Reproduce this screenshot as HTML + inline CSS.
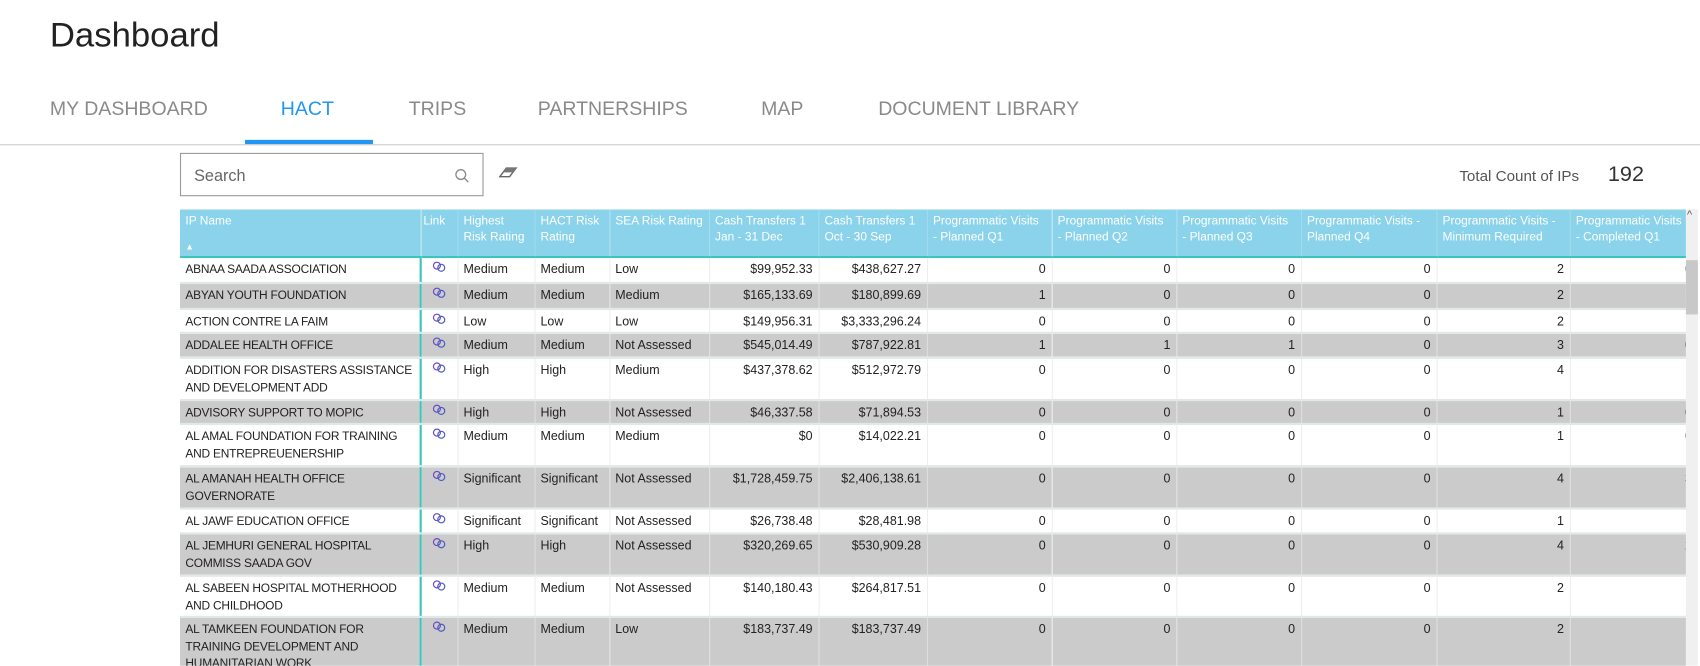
<!DOCTYPE html>
<html><head><meta charset="utf-8"><style>
body{margin:0;width:1700px;height:665px;background:#fff;overflow:hidden;font-family:"Liberation Sans",sans-serif;position:relative}
#w{position:absolute;left:0;top:0;width:1568px;height:614px;transform:scale(1.0842);transform-origin:0 0;overflow:hidden}
.title{position:absolute;left:46px;top:14px;font-size:32px;color:#222}
.tab{position:absolute;top:90px;font-size:18px;color:#8a8a8a}
.hl{position:absolute;left:0;top:133px;width:1568px;height:1px;background:#ccc}
.ul{position:absolute;left:226px;top:129px;width:118px;height:4px;background:#2196f3}
.search{position:absolute;left:166px;top:141px;width:280px;height:40px;border:1px solid #999;box-sizing:border-box;color:#666;font-size:15px;padding:12px 0 0 12px}
.tbl{position:absolute;left:166px;top:193px;width:1389px;height:430px;overflow:hidden}
table{border-collapse:collapse;table-layout:fixed;width:1400px;font-size:11.5px;color:#222}
th{background:#8ad3ea;color:#fff;font-weight:normal;text-align:left;vertical-align:top;padding:4px 5px 0 5px;height:35px;border-bottom:2px solid #3cc5bd;line-height:15px;font-size:11px;border-right:1px solid #9fdbec;position:relative}
td{vertical-align:top;padding:4px 5px 0 5px;line-height:15.5px;border-bottom:2px solid #e0e8e8;border-right:1px solid #eee;white-space:nowrap;overflow:hidden}
td.n{white-space:normal;font-size:11px;letter-spacing:-0.2px;border-right:2px solid #3cc5bd}
td.r{text-align:right}
tr.g td{background:#cbcbcb;border-right-color:#ddd}
tr.g td.n{border-right-color:#3cc5bd}
td.lk{text-align:center;padding:3px 0 0 0}
.sb{position:absolute;left:1555px;top:193px;width:11px;height:430px;background:#f0f0f0}
.th{position:absolute;left:1555px;top:240px;width:11px;height:50px;background:#c8c8c8}
</style></head><body><div id="w">
<svg width="0" height="0" style="position:absolute"><symbol id="lk" viewBox="0 0 14 10"><circle cx="5" cy="4" r="3.2" fill="none" stroke="#6a4cc4" stroke-width="1.1"/><circle cx="9" cy="6" r="3.2" fill="none" stroke="#4a5cc4" stroke-width="1.1"/></symbol></svg>
<div class="title">Dashboard</div>
<div class="tab" style="left:46px">MY DASHBOARD</div>
<div class="tab" style="left:259px;color:#2196f3">HACT</div>
<div class="tab" style="left:377px">TRIPS</div>
<div class="tab" style="left:496px">PARTNERSHIPS</div>
<div class="tab" style="left:702px">MAP</div>
<div class="tab" style="left:810px">DOCUMENT LIBRARY</div>
<div class="ul"></div><div class="hl"></div>
<div class="search">Search<svg style="position:absolute;left:252px;top:13px" width="14" height="14" viewBox="0 0 14 14"><circle cx="6" cy="6" r="4.5" fill="none" stroke="#888" stroke-width="1.2"/><path d="M9.3 9.3L13 13" stroke="#888" stroke-width="1.2"/></svg></div>
<svg style="position:absolute;left:460px;top:153px" width="18" height="12" viewBox="0 0 18 12"><path d="M1 10L7 2H16L10 10Z" fill="none" stroke="#666" stroke-width="1.3"/><path d="M4 6H13L16 2H7Z" fill="#777"/></svg>
<div style="position:absolute;left:1346px;top:154px;font-size:14px;color:#555">Total Count of IPs</div>
<div style="position:absolute;left:1483px;top:150px;font-size:20px;color:#333">192</div>
<div class="tbl"><table>
<colgroup><col style="width:222px"><col style="width:34px"><col style="width:71px"><col style="width:69px"><col style="width:92px"><col style="width:101px"><col style="width:100px"><col style="width:115px"><col style="width:115px"><col style="width:115px"><col style="width:125px"><col style="width:123px"><col style="width:118px"></colgroup>
<tr><th>IP Name<span style="position:absolute;left:5px;top:27px;font-size:8px">▲</span></th><th style="padding:4px 2px">Link</th><th>Highest Risk Rating</th><th>HACT Risk Rating</th><th>SEA Risk Rating</th><th>Cash Transfers 1 Jan - 31 Dec</th><th>Cash Transfers 1 Oct - 30 Sep</th><th>Programmatic Visits - Planned Q1</th><th>Programmatic Visits - Planned Q2</th><th>Programmatic Visits - Planned Q3</th><th>Programmatic Visits - Planned Q4</th><th>Programmatic Visits - Minimum Required</th><th>Programmatic Visits<br>- Completed Q1</th></tr>
<tr style="height:24px"><td class="n">ABNAA SAADA ASSOCIATION</td><td class="lk"><svg width="14" height="10"><use href="#lk"/></svg></td><td>Medium</td><td>Medium</td><td>Low</td><td class="r">$99,952.33</td><td class="r">$438,627.27</td><td class="r">0</td><td class="r">0</td><td class="r">0</td><td class="r">0</td><td class="r">2</td><td class="r">0</td></tr>
<tr class="g" style="height:24px"><td class="n">ABYAN YOUTH FOUNDATION</td><td class="lk"><svg width="14" height="10"><use href="#lk"/></svg></td><td>Medium</td><td>Medium</td><td>Medium</td><td class="r">$165,133.69</td><td class="r">$180,899.69</td><td class="r">1</td><td class="r">0</td><td class="r">0</td><td class="r">0</td><td class="r">2</td><td class="r">1</td></tr>
<tr style="height:22px"><td class="n">ACTION CONTRE LA FAIM</td><td class="lk"><svg width="14" height="10"><use href="#lk"/></svg></td><td>Low</td><td>Low</td><td>Low</td><td class="r">$149,956.31</td><td class="r">$3,333,296.24</td><td class="r">0</td><td class="r">0</td><td class="r">0</td><td class="r">0</td><td class="r">2</td><td class="r">1</td></tr>
<tr class="g" style="height:23px"><td class="n">ADDALEE HEALTH OFFICE</td><td class="lk"><svg width="14" height="10"><use href="#lk"/></svg></td><td>Medium</td><td>Medium</td><td>Not Assessed</td><td class="r">$545,014.49</td><td class="r">$787,922.81</td><td class="r">1</td><td class="r">1</td><td class="r">1</td><td class="r">0</td><td class="r">3</td><td class="r">0</td></tr>
<tr style="height:39px"><td class="n">ADDITION FOR DISASTERS ASSISTANCE AND DEVELOPMENT ADD</td><td class="lk"><svg width="14" height="10"><use href="#lk"/></svg></td><td>High</td><td>High</td><td>Medium</td><td class="r">$437,378.62</td><td class="r">$512,972.79</td><td class="r">0</td><td class="r">0</td><td class="r">0</td><td class="r">0</td><td class="r">4</td><td class="r">1</td></tr>
<tr class="g" style="height:22px"><td class="n">ADVISORY SUPPORT TO MOPIC</td><td class="lk"><svg width="14" height="10"><use href="#lk"/></svg></td><td>High</td><td>High</td><td>Not Assessed</td><td class="r">$46,337.58</td><td class="r">$71,894.53</td><td class="r">0</td><td class="r">0</td><td class="r">0</td><td class="r">0</td><td class="r">1</td><td class="r">0</td></tr>
<tr style="height:39px"><td class="n">AL AMAL FOUNDATION FOR TRAINING AND ENTREPREUENERSHIP</td><td class="lk"><svg width="14" height="10"><use href="#lk"/></svg></td><td>Medium</td><td>Medium</td><td>Medium</td><td class="r">$0</td><td class="r">$14,022.21</td><td class="r">0</td><td class="r">0</td><td class="r">0</td><td class="r">0</td><td class="r">1</td><td class="r">0</td></tr>
<tr class="g" style="height:39px"><td class="n">AL AMANAH HEALTH OFFICE GOVERNORATE</td><td class="lk"><svg width="14" height="10"><use href="#lk"/></svg></td><td>Significant</td><td>Significant</td><td>Not Assessed</td><td class="r">$1,728,459.75</td><td class="r">$2,406,138.61</td><td class="r">0</td><td class="r">0</td><td class="r">0</td><td class="r">0</td><td class="r">4</td><td class="r">3</td></tr>
<tr style="height:23px"><td class="n">AL JAWF EDUCATION OFFICE</td><td class="lk"><svg width="14" height="10"><use href="#lk"/></svg></td><td>Significant</td><td>Significant</td><td>Not Assessed</td><td class="r">$26,738.48</td><td class="r">$28,481.98</td><td class="r">0</td><td class="r">0</td><td class="r">0</td><td class="r">0</td><td class="r">1</td><td class="r">1</td></tr>
<tr class="g" style="height:39px"><td class="n">AL JEMHURI GENERAL HOSPITAL COMMISS SAADA GOV</td><td class="lk"><svg width="14" height="10"><use href="#lk"/></svg></td><td>High</td><td>High</td><td>Not Assessed</td><td class="r">$320,269.65</td><td class="r">$530,909.28</td><td class="r">0</td><td class="r">0</td><td class="r">0</td><td class="r">0</td><td class="r">4</td><td class="r">2</td></tr>
<tr style="height:38px"><td class="n">AL SABEEN HOSPITAL MOTHERHOOD AND CHILDHOOD</td><td class="lk"><svg width="14" height="10"><use href="#lk"/></svg></td><td>Medium</td><td>Medium</td><td>Not Assessed</td><td class="r">$140,180.43</td><td class="r">$264,817.51</td><td class="r">0</td><td class="r">0</td><td class="r">0</td><td class="r">0</td><td class="r">2</td><td class="r">1</td></tr>
<tr class="g" style="height:56px"><td class="n">AL TAMKEEN FOUNDATION FOR TRAINING DEVELOPMENT AND HUMANITARIAN WORK</td><td class="lk"><svg width="14" height="10"><use href="#lk"/></svg></td><td>Medium</td><td>Medium</td><td>Low</td><td class="r">$183,737.49</td><td class="r">$183,737.49</td><td class="r">0</td><td class="r">0</td><td class="r">0</td><td class="r">0</td><td class="r">2</td><td class="r">1</td></tr>
</table></div>
<div class="sb"></div><div class="th"></div>
<div style="position:absolute;left:1556px;top:193px;font-size:10px;color:#555">^</div>
</div></body></html>
